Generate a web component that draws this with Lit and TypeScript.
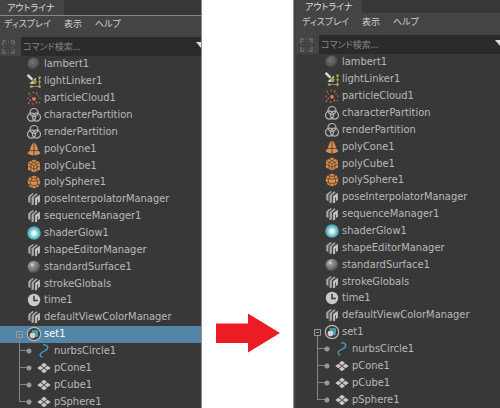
import { LitElement, html, css, svg, nothing } from "lit";
import { customElement, property } from "lit/decorators.js";
import { classMap } from "lit/directives/class-map.js";

type Item = { name: string; icon: string; child?: boolean; parent?: boolean };

const items: Item[] = [
  { name: "lambert1", icon: "lambert" },
  { name: "lightLinker1", icon: "light" },
  { name: "particleCloud1", icon: "particles" },
  { name: "characterPartition", icon: "partition" },
  { name: "renderPartition", icon: "partition" },
  { name: "polyCone1", icon: "cone" },
  { name: "polyCube1", icon: "cube" },
  { name: "polySphere1", icon: "sphere" },
  { name: "poseInterpolatorManager", icon: "manager" },
  { name: "sequenceManager1", icon: "manager" },
  { name: "shaderGlow1", icon: "glow" },
  { name: "shapeEditorManager", icon: "manager" },
  { name: "standardSurface1", icon: "surface" },
  { name: "strokeGlobals", icon: "manager" },
  { name: "time1", icon: "clock" },
  { name: "defaultViewColorManager", icon: "manager" },
  { name: "set1", icon: "set", parent: true },
  { name: "nurbsCircle1", icon: "curve", child: true },
  { name: "pCone1", icon: "mesh", child: true },
  { name: "pCube1", icon: "mesh", child: true },
  { name: "pSphere1", icon: "mesh", child: true },
];

const shapes: Record<string, unknown> = {
  lambert: svg`
    <defs><radialGradient id="g" cx=".38" cy=".36" r=".65">
      <stop offset="0" stop-color="#747474"/><stop offset=".6" stop-color="#585858"/><stop offset="1" stop-color="#303030"/>
    </radialGradient></defs>
    <circle cx="7" cy="7" r="6.5" fill="url(#g)"/>`,
  surface: svg`
    <defs><radialGradient id="g" cx=".36" cy=".32" r=".7">
      <stop offset="0" stop-color="#e0e0e0"/><stop offset=".25" stop-color="#969696"/><stop offset=".7" stop-color="#6c6c6c"/><stop offset="1" stop-color="#404040"/>
    </radialGradient></defs>
    <circle cx="7" cy="7" r="6.3" fill="url(#g)"/>`,
  glow: svg`
    <defs><radialGradient id="g" cx=".5" cy=".52" r=".5">
      <stop offset="0" stop-color="#fff"/><stop offset=".3" stop-color="#d5f0f1"/><stop offset=".8" stop-color="#55b5bf"/><stop offset="1" stop-color="#46a5b0"/>
    </radialGradient></defs>
    <circle cx="7" cy="7" r="6.8" fill="url(#g)"/>`,
  light: svg`
    <path d="M.6.8L5.4 5.6" stroke="#ddd" stroke-width="2.4"/>
    <path d="M8.8 3.4V9.8H2.4Z" fill="#ddd"/>
    <circle cx="7.6" cy="7.4" r="2" fill="#9b9636"/>
    <path d="M12.5 4V12.5H4" fill="none" stroke="#aaa" stroke-width=".7"/>
    <path d="M11.4 2.4h2.3v2.3h-2.3zM11.4 7h2.3v1.6h-2.3zM11.4 11.4h2.3v2.3h-2.3zM3.2 11.4h2.3v2.3H3.2z" fill="#b8ad33"/>`,
  particles: svg`
    <circle cx="7" cy="7.8" r="1.9" fill="#e07a5f"/>
    <g fill="#bf6550"><circle cx="2.3" cy="2.6" r=".9"/><circle cx="6.3" cy="1.4" r=".8"/><circle cx="9.6" cy="2.6" r="1"/>
    <circle cx="3.6" cy="5.1" r=".7"/><circle cx="11.1" cy="5" r=".8"/><circle cx="13" cy="7.2" r=".8"/><circle cx="1" cy="7.3" r=".8"/>
    <circle cx="3.3" cy="9.3" r=".9"/><circle cx="1.7" cy="12" r=".9"/><circle cx="5.6" cy="12.8" r=".9"/><circle cx="9.4" cy="11.4" r="1"/><circle cx="12.4" cy="11.6" r=".8"/></g>`,
  partition: svg`
    <g fill="none" stroke="#b4b4b4" stroke-width="1.2"><circle cx="7" cy="4.5" r="4"/><circle cx="4.5" cy="9.2" r="4"/><circle cx="9.5" cy="9.2" r="4"/></g>`,
  cone: svg`
    <path d="M6.6.6V8H2.9Q4.3 2.4 6.6.6ZM7.4.6V8h3.7Q9.7 2.4 7.4.6ZM2.3 8.7h4.3v4.7Q2.7 13.2.6 11.5ZM11.7 8.7H7.4v4.7q3.9-.2 6-1.9Z" fill="#dc8f4d"/>`,
  cube: svg`
    <path d="M7 .5L13 3.6V10.4L7 13.6 1 10.4V3.6Z" fill="#dc8f4d"/>
    <path d="M1 3.6L7 6.8 13 3.6M7 6.8V13.6M4 2L10 5.2V12M10 2L4 5.2V12M1 7L7 10.2 13 7" fill="none" stroke="#54402f" stroke-width=".8"/>`,
  sphere: svg`
    <circle cx="7" cy="7" r="6.2" fill="#dc8f4d"/>
    <path d="M.8 5Q7 7.6 13.2 5M.8 9.2Q7 12 13.2 9.2M2.8 2.5Q7 4.4 11.2 2.5M4.7 1V5.7M9.3 1V5.7M3.4 6V10M10.6 6V10M5 10.8V13.4M9 10.8V13.4" fill="none" stroke="#54402f" stroke-width=".8"/>`,
  manager: svg`
    <path d="M1.3 4.3L5.8.9 6.9 1.9 3.6 4.6V11.2L1.3 10ZM4.5 5.3L9.5 1.3 10.6 2.5 6.9 5.5V12.6L4.5 13.3Z" fill="#a8a8a8"/>
    <path d="M8.1 6L12.9 2.8V9.8L11 11V7L10.2 7.7V12.4L8.1 13.5Z" fill="#c2c2c2"/>
    <path d="M4 5.2V11.8M7.5 5.6V12.8M4 5.2L8 2M7.5 5.6L11.5 2.7" fill="none" stroke="#4a4a4a" stroke-width=".6"/>`,
  clock: svg`
    <circle cx="7" cy="7" r="6.2" fill="#c9c9c9"/>
    <path d="M7 2.7V7.4H10.8" fill="none" stroke="#383838" stroke-width="1.5"/>`,
  set: svg`
    <circle cx="7" cy="7" r="6.7" fill="#3c3c3c" stroke="#b8b8b8" stroke-width="1.2"/>
    <path d="M4.8 3.2H10.8V9.6L8.6 10.8V5H4.8Z" fill="#4aa9b5"/>
    <path d="M6 4.6H9V9H6Z" fill="#3f8f9a"/>
    <circle cx="5.5" cy="8.4" r="2.8" fill="#d2d2d2"/>`,
  curve: svg`
    <path d="M6.2.9C9.6.2 12.2 3 9.6 5.6C7.8 7.4 2.8 8.4 3.1 11C3.3 12.5 4.4 13.1 5.4 13.4" fill="none" stroke="#4b93b8" stroke-width="1.5"/>`,
  mesh: svg`
    <path d="M7 1.8L10 4.1 7 6.4 4 4.1ZM3.4 4.7L6.5 7 3.4 9.3.3 7ZM10.6 4.7L13.7 7 10.6 9.3 7.5 7ZM7 7.6L10 9.9 7 12.2 4 9.9Z" fill="#c9c9c9"/>`,
};

@customElement("tree-icon")
class TreeIcon extends LitElement {
  @property() kind = "";
  static styles = css`
    :host { display: block; flex: none; width: 14px; height: 14px; }
    svg { display: block; width: 100%; height: 100%; overflow: visible; }
  `;
  render() {
    return html`<svg viewBox="0 0 14 14" aria-hidden="true">${shapes[this.kind]}</svg>`;
  }
}

@customElement("outliner-pane")
class OutlinerPane extends LitElement {
  @property() selected = "";
  static styles = css`
    :host {
      display: flex;
      flex-direction: column;
      min-width: 0;
      background: #444;
      color: #b9b9b9;
      font: 11px/16px "DejaVu Sans Condensed", "Noto Sans CJK JP", sans-serif;
    }
    button, input {
      font: 9px/14px "Noto Sans CJK JP", sans-serif;
      font-feature-settings: "palt";
      color: inherit;
      background: none;
      border: 0;
      padding: 0;
      margin: 0;
    }
    .tabs { display: flex; height: var(--tab-height, 15px); background: #373737; border-bottom: 1px solid var(--tab-line, #858585); }
    .tab { width: 64px; padding-left: 7px; text-align: left; background: #444; color: #dedede; }
    .menus { display: flex; gap: 13px; height: 16px; padding-left: 4px; color: #d0d0d0; }
    .search { display: flex; align-items: stretch; height: 19px; margin-top: 5px; }
    .filter { width: 21px; padding-left: 2px; display: flex; align-items: center; }
    .filter svg { width: 13px; height: 14px; }
    .field { flex: 1; min-width: 0; display: flex; background: #2b2b2b; border-radius: 2px 0 0 0; overflow: hidden; }
    .field input { flex: 1; min-width: 0; padding-left: 2px; outline: 0; }
    .field input::placeholder { color: #858585; opacity: 1; }
    .drop { width: 5px; overflow: hidden; display: flex; align-items: flex-start; padding-top: 5px; }
    .drop svg { flex: none; width: 10px; height: 6px; }
    .tree {
      flex: 1;
      display: grid;
      grid-auto-rows: 1fr;
      list-style: none;
      margin: 0 0 0 var(--bleed, 0);
      padding: 0;
      background: #383838;
    }
    li { min-height: 0; }
    .row { display: flex; align-items: center; height: 100%; padding-left: var(--indent, 0); white-space: nowrap; }
    .name { margin-left: 3px; height: 16px; }
    .selected { background: #5285a6; color: #fff; }
    .lead { flex: none; align-self: stretch; width: 27px; display: flex; align-items: center; }
    .parent { background: linear-gradient(#858585, #858585) 19px 100% / 1px 5px no-repeat; }
    .branch {
      width: 37px;
      background:
        radial-gradient(circle at center, #989898 2px, transparent 3px) 26px 50% / 6px 6px no-repeat,
        linear-gradient(#858585, #858585) 19px 50% / 9px 1px no-repeat,
        linear-gradient(#858585, #858585) 19px 0 / 1px 100% no-repeat;
    }
    .last { background-size: 6px 6px, 9px 1px, 1px 50%; }
    .toggle { width: 7px; height: 7px; margin-left: 16px; display: flex; color: #999; }
    .toggle svg { width: 7px; height: 7px; }
  `;

  row(item: Item, index: number) {
    const last = index === items.length - 1;
    return html`<li role="treeitem" aria-level=${item.child ? 2 : 1} aria-selected=${item.name === this.selected}
      aria-expanded=${item.parent ? "true" : nothing}>
      <div class=${classMap({ row: true, selected: item.name === this.selected })}>
        <span class=${classMap({ lead: true, parent: !!item.parent, branch: !!item.child, last })}>
          ${item.parent
            ? html`<button class="toggle" aria-label="set1"><svg viewBox="0 0 7 7">
                <path d="M.5.5h6v6h-6zM2 3.5h3" fill="none" stroke="currentColor"/></svg></button>`
            : nothing}
        </span>
        <tree-icon kind=${item.icon}></tree-icon>
        <span class="name">${item.name}</span>
      </div>
    </li>`;
  }

  render() {
    return html`
      <div class="tabs" role="tablist"><button class="tab" role="tab" aria-selected="true">アウトライナ</button></div>
      <nav class="menus"><button>ディスプレイ</button><button>表示</button><button>ヘルプ</button></nav>
      <div class="search">
        <button class="filter" aria-label="フィルタ"><svg viewBox="0 0 13 14" fill="none" stroke="#6c6c6c">
          <path d="M1 5V1H4M9 1h3V5M12 9v4H9M4 13H1V9" stroke-width="1.4"/>
          <path d="M3 3l1 1M10 3L9 4M3 11l1-1M10 11L9 10M6 1.5h1M6 12.5h1M1.5 7h1M10.5 7h1"/></svg></button>
        <div class="field">
          <input type="text" placeholder="コマンド検索..." aria-label="コマンド検索" />
          <button class="drop" aria-label="履歴"><svg viewBox="0 0 10 6"><path d="M0 0h10L5 6z" fill="#ddd"/></svg></button>
        </div>
      </div>
      <ul class="tree" role="tree">${items.map((item, i) => this.row(item, i))}</ul>`;
  }
}

@customElement("app-root")
class AppRoot extends LitElement {
  static styles = css`
    :host {
      display: grid;
      grid-template-columns: 202fr 91fr 207fr;
      min-height: 100vh;
      background: #fff;
      overflow: hidden;
    }
    .before { border-right: 1px solid #8f8f8f; margin-bottom: -2px; }
    .after {
      border-left: 1px solid #8f8f8f;
      padding-left: 4px;
      --tab-height: 13px;
      --tab-line: #444;
      --bleed: -2px;
      --indent: 2px;
    }
    .between { display: flex; align-items: flex-end; justify-content: center; padding-bottom: 55px; }
    .arrow { width: 64px; height: 40px; }
  `;
  render() {
    return html`
      <outliner-pane class="before" selected="set1"></outliner-pane>
      <div class="between"><svg class="arrow" viewBox="0 0 64 40" aria-hidden="true">
        <path d="M0 10.5H32V.5L64 20 32 39.5V30H0Z" fill="#ed1c24"/></svg></div>
      <outliner-pane class="after"></outliner-pane>`;
  }
}
